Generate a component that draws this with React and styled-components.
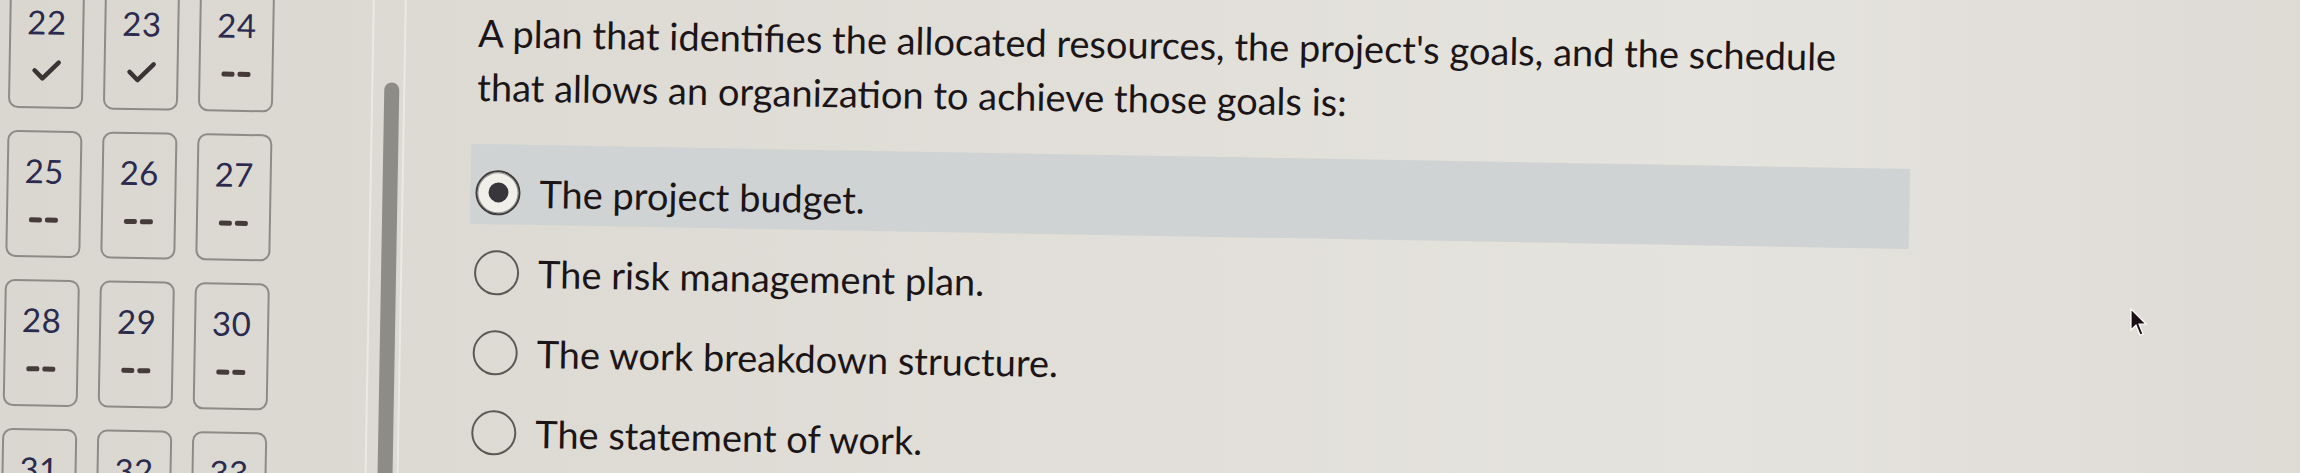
import React from 'react'
import styled, { createGlobalStyle } from 'styled-components'

const GlobalStyle = createGlobalStyle`
  html, body {
    margin: 0;
    padding: 0;
    height: 473px;
    overflow: hidden;
  }
  body {
    font-family: Lato, "Open Sans", sans-serif;
    background: linear-gradient(90deg, #d9d7cf 0%, #dedcd5 30%, #e5e3dd 75%, #dddbd4 100%);
    color: #1c1517;
  }
`

const Screen = styled.div`
  position: relative;
  height: 473px;
  overflow: hidden;
`

/* the photo is taken a little askew, so the whole page is turned by a degree */
const Page = styled.div`
  display: flex;
  height: 520px;
  transform: rotate(1deg);
  transform-origin: 478px 48px;
`

const Sidebar = styled.div`
  width: 372px;
  flex-shrink: 0;
  overflow: hidden;
  padding-left: 9px;
  box-sizing: border-box;
`

const CardGrid = styled.div`
  display: grid;
  grid-template-columns: repeat(3, 75px);
  column-gap: 20px;
  row-gap: 22px;
  margin-top: -11px;
`

const Card = styled.div`
  height: 127px;
  box-sizing: border-box;
  border: 2px solid #8d8b86;
  border-radius: 10px;
  display: flex;
  flex-direction: column;
  align-items: center;
  padding-top: 18px;
`

const CardNumber = styled.div`
  font-size: 33px;
  line-height: 40px;
  color: #2b2a4f;
  letter-spacing: 0.5px;
`

const CardStatus = styled.div`
  height: 34px;
  margin-top: 12px;
  display: flex;
  align-items: center;
  justify-content: center;
  color: #3d3634;
`

const Dashes = styled.span`
  display: flex;
  gap: 3px;
`

const Dash = styled.span`
  width: 13px;
  height: 5px;
  border-radius: 2px;
  background: #453c39;
`

const ScrollTrack = styled.div`
  width: 34px;
  flex-shrink: 0;
  box-sizing: border-box;
  border-left: 2px solid #ebe9e3;
  border-right: 2px solid #ebe9e3;
  padding: 84px 0 0 11px;
`

const ScrollThumb = styled.div`
  width: 15px;
  height: 460px;
  border-radius: 8px 8px 0 0;
  background: #8e8c87;
`

const Main = styled.div`
  flex: 1;
  padding-left: 67px;
  box-sizing: border-box;
`

const Question = styled.div`
  padding: 5px 0 0 5px;
  width: 1390px;
  font-size: 38px;
  line-height: 54px;
`

const Options = styled.div`
  margin-top: 31px;
  width: 1439px;
`

const Option = styled.div`
  height: 80px;
  box-sizing: border-box;
  padding: 16px 0 0 5px;
  display: flex;
  align-items: center;
  gap: 19px;
  font-size: 38px;
  background: ${({ selected }) => (selected ? '#cfd3d3' : 'transparent')};
`

const Radio = styled.span`
  width: 45px;
  height: 45px;
  box-sizing: border-box;
  border-radius: 50%;
  border: 2.5px solid ${({ checked }) => (checked ? '#3f3d3d' : '#5b5957')};
  background: ${({ checked }) => (checked ? '#f0efea' : 'transparent')};
  box-shadow: ${({ checked }) => (checked ? 'inset 0 0 0 1px #9a9894' : 'none')};
  display: flex;
  align-items: center;
  justify-content: center;
  flex-shrink: 0;
`

const RadioDot = styled.span`
  width: 20px;
  height: 20px;
  border-radius: 50%;
  background: #38363a;
`

const Cursor = styled.svg`
  position: absolute;
  left: 2130px;
  top: 308px;
`

const cards = [
  { n: 22, done: true },
  { n: 23, done: true },
  { n: 24 },
  { n: 25 },
  { n: 26 },
  { n: 27 },
  { n: 28 },
  { n: 29 },
  { n: 30 },
  { n: 31 },
  { n: 32 },
  { n: 33 },
]

const answers = [
  'The project budget.',
  'The risk management plan.',
  'The work breakdown structure.',
  'The statement of work.',
]

const Check = () => (
  <svg width="30" height="22" viewBox="0 0 30 22">
    <path d="M3 11 L11 19 L27 3" fill="none" stroke="#3a3534" strokeWidth="4.5" strokeLinecap="round" strokeLinejoin="round" />
  </svg>
)

const App = () => {
  return (
    <Screen>
      <GlobalStyle />
      <Page>
        <Sidebar>
          <CardGrid>
            {cards.map((c) => (
              <Card key={c.n}>
                <CardNumber>{c.n}</CardNumber>
                <CardStatus>
                  {c.done ? <Check /> : <Dashes><Dash /><Dash /></Dashes>}
                </CardStatus>
              </Card>
            ))}
          </CardGrid>
        </Sidebar>
        <ScrollTrack>
          <ScrollThumb />
        </ScrollTrack>
        <Main>
          <Question>
            A plan that identifies the allocated resources, the project's goals, and the schedule
            that allows an organization to achieve those goals is:
          </Question>
          <Options>
            {answers.map((a, i) => (
              <Option key={a} selected={i === 0}>
                <Radio checked={i === 0}>{i === 0 && <RadioDot />}</Radio>
                {a}
              </Option>
            ))}
          </Options>
        </Main>
      </Page>
      <Cursor width="20" height="30" viewBox="0 0 20 30">
        <path d="M1 1 L1 22 L6 17 L10 27 L13 26 L9 16 L16 16 Z" fill="#1a1014" stroke="#ffffff" strokeWidth="1.2" />
      </Cursor>
    </Screen>
  )
}

export default App
